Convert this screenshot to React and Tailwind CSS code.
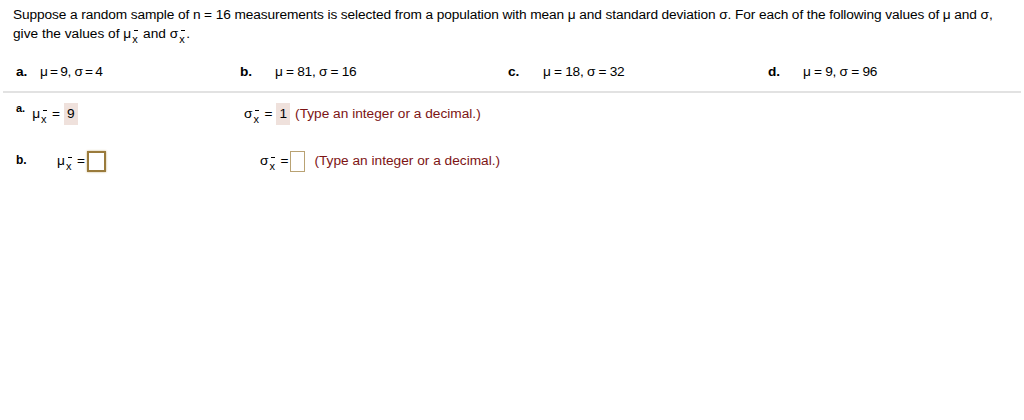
import React from "react";

const font = { fontFamily: '"Liberation Sans", Arial, sans-serif' };

function XBar() {
  return (
    <span className="relative top-[5px] ml-px inline-block w-[7px] text-[11px] leading-none">
      <span className="absolute left-[2px] top-[-4px] h-px w-[4px] bg-black" />
      x
    </span>
  );
}

function Sym({ s }) {
  return (
    <span className="inline-block whitespace-nowrap">
      {s}
      <XBar />
    </span>
  );
}

const cases = [
  { label: "a.", text: "μ\u2009=\u20099, σ\u2009=\u20094", w: "w-[224px]", gap: "w-[24px]" },
  { label: "b.", text: "μ = 81, σ = 16", w: "w-[268px]", gap: "w-[35px]" },
  { label: "c.", text: "μ = 18, σ = 32", w: "w-[260px]", gap: "w-[35px]" },
  { label: "d.", text: "μ = 9, σ = 96", w: "w-[220px]", gap: "w-[35px]" },
];

export default function App() {
  return (
    <div className="h-[420px] w-[1024px] bg-white text-[13.7px] text-black" style={font}>
      <div className="px-[13px] pt-[5px] leading-[19px]">
        <p className="tracking-[-0.1px]">
          Suppose a random sample of n = 16 measurements is selected from a population with mean μ and standard
          deviation σ. For each of the following values of μ and σ,
        </p>
        <p>
          give the values of <Sym s="μ" /> and <Sym s="σ" />.
        </p>
      </div>

      <div className="mt-[19px] flex pl-[16px] leading-[19px]">
        {cases.map((c) => (
          <div key={c.label} className={`flex ${c.w}`}>
            <span className={`font-bold ${c.gap}`}>{c.label}</span>
            <span className="tracking-[-0.3px]">{c.text}</span>
          </div>
        ))}
      </div>

      <div className="mx-[3px] mt-[10px] h-[2px] bg-[#e2e2e2]" />

      <div className="mt-[11px] flex h-[20px] items-center pl-[16px]">
        <div className="flex w-[228px] items-center">
          <span className="mr-[7px] self-start text-[11px] font-bold leading-none">a.</span>
          <Sym s="μ" />
          <span className="ml-[4px] mr-[4px]">=</span>
          <span className="bg-[#efe1dc] px-[3px] py-[1px]">9</span>
        </div>
        <div className="flex items-center">
          <Sym s="σ" />
          <span className="ml-[4px] mr-[4px]">=</span>
          <span className="bg-[#efe1dc] px-[3px] py-[1px]">1</span>
          <span className="ml-[5px] text-[#7d1414]">(Type an integer or a decimal.)</span>
        </div>
      </div>

      <div className="mt-[27px] flex items-center pl-[16px]">
        <div className="flex w-[244px] items-center">
          <span className="w-[41px] self-start text-[12px] font-bold">b.</span>
          <Sym s="μ" />
          <span className="ml-[4px] mr-[2px]">=</span>
          <span className="h-[21px] w-[19px] border-2 border-[#9a7b3c] shadow-[0_0_2px_#c8b080]" />
        </div>
        <div className="flex items-center">
          <Sym s="σ" />
          <span className="ml-[4px] mr-[2px]">=</span>
          <span className="h-[21px] w-[15px] border border-[#b9a273]" />
          <span className="ml-[9px] text-[#7d1414]">(Type an integer or a decimal.)</span>
        </div>
      </div>
    </div>
  );
}
